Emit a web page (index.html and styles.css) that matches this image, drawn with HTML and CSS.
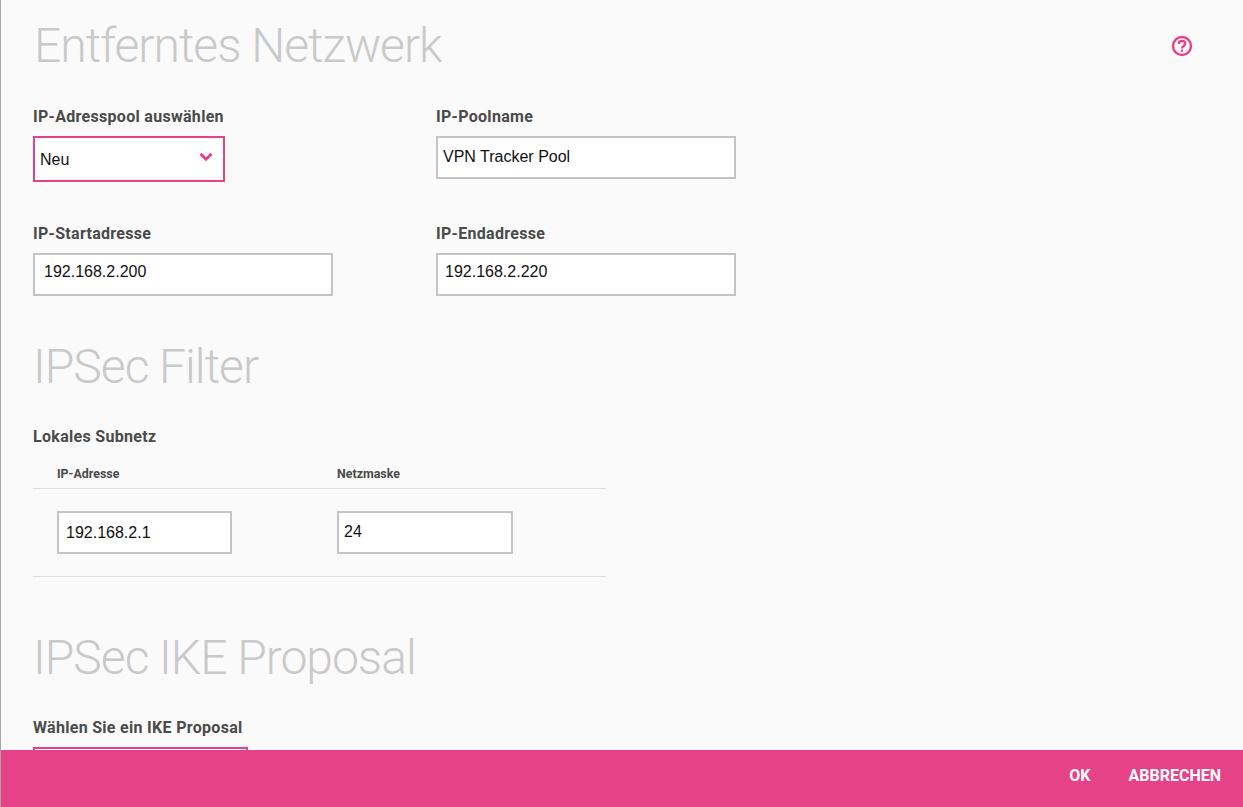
FILE: index.html
```html
<!DOCTYPE html>
<html lang="de">
<head>
    <meta charset="UTF-8">
    <title>Entferntes Netzwerk</title>
    <link rel="stylesheet" href="styles.css">
</head>
<body>
<div class="page">
    <a class="help" href="#" aria-label="Hilfe">
        <svg width="22" height="22" viewBox="0 0 22 22" fill="none" stroke="#e64288">
            <circle cx="11" cy="11" r="9" stroke-width="2.4"/>
            <path d="M7.9 8.9c0-1.900 1.400-3 3.100-3s3.100 1.100 3.100 2.800c0 2.400-3.100 2.400-3.100 4.700" stroke-width="2.4"/>
            <path d="M11 14.600v2.200" stroke-width="2.4"/>
        </svg>
    </a>

    <h1 class="section-title first">Entferntes Netzwerk</h1>

    <div class="form-row row-pool">
        <div class="field">
            <label>IP-Adresspool auswählen</label>
            <div class="select">
                <span>Neu</span>
                <svg class="chevron" width="14" height="10" viewBox="0 0 14 10" fill="none" stroke="#e64288" stroke-width="3">
                    <path d="M1.500 1.800 7 7.200l5.500-5.400"/>
                </svg>
            </div>
        </div>
        <div class="field">
            <label>IP-Poolname</label>
            <input class="input" type="text" value="VPN Tracker Pool">
        </div>
    </div>

    <div class="form-row row-range">
        <div class="field">
            <label>IP-Startadresse</label>
            <input class="input input-start" type="text" value="192.168.2.200">
        </div>
        <div class="field">
            <label>IP-Endadresse</label>
            <input class="input input-end" type="text" value="192.168.2.220">
        </div>
    </div>

    <h2 class="section-title">IPSec Filter</h2>

    <h3 class="group-label">Lokales Subnetz</h3>
    <table class="subnet">
        <thead>
        <tr>
            <th>IP-Adresse</th>
            <th>Netzmaske</th>
        </tr>
        </thead>
        <tbody>
        <tr>
            <td><input class="input input-ip" type="text" value="192.168.2.1"></td>
            <td><input class="input input-mask" type="text" value="24"></td>
        </tr>
        </tbody>
    </table>

    <h2 class="section-title proposal">IPSec IKE Proposal</h2>

    <label class="group-label proposal-label">Wählen Sie ein IKE Proposal</label>
    <div class="select select-proposal"></div>
</div>

<div class="footer">
    <a href="#">OK</a>
    <a href="#">ABBRECHEN</a>
</div>
</body>
</html>
```

FILE: styles.css
```css
html, body {
    height: 100%;
    margin: 0;
    overflow: hidden;
}
body {
    background-color: #fafafa;
    font-family: Roboto, 'Liberation Sans', sans-serif;
    color: #4a4a4a;
}
.page {
    position: relative;
    height: 100vh;
    box-sizing: border-box;
    padding-left: 32px;
    border-left: 1px solid #a6a6a6;
}
.section-title {
    margin: 0;
    font-size: 48px;
    line-height: 56px;
    font-weight: 300;
    letter-spacing: -1px;
    color: #c9c9c9;
}
.section-title.first {
    padding-top: 18px;
    margin-left: 1px;
}
.help {
    position: absolute;
    top: 35px;
    left: 1170px;
    width: 22px;
    height: 22px;
}
.form-row {
    display: flex;
}
.field {
    width: 403px;
}
.field label, .group-label {
    display: block;
    margin: 0;
    font-size: 16px;
    line-height: 20px;
    font-weight: 700;
    letter-spacing: 0.3px;
    color: #4a4a4a;
}
.row-pool {
    margin-top: 33px;
}
.row-pool label {
    margin-bottom: 9px;
}
.row-range {
    margin-top: 42px;
}
.row-range label {
    margin-bottom: 9px;
}
.select {
    display: flex;
    justify-content: space-between;
    box-sizing: border-box;
    width: 192px;
    height: 46px;
    padding: 12px 10px 0 5px;
    background: white;
    border: 2px solid #e64288;
    font-family: 'Liberation Sans', sans-serif;
    font-size: 16px;
    line-height: 20px;
    color: #111;
}
.chevron {
    margin-top: 2px;
}
.input {
    display: block;
    box-sizing: border-box;
    width: 300px;
    height: 43px;
    padding: 0 5px 2px;
    background: white;
    border: 2px solid #c4c4c4;
    border-radius: 0;
    outline: none;
    font-family: 'Liberation Sans', sans-serif;
    font-size: 16px;
    color: #111;
}
.input-start {
    padding-left: 9px;
    padding-bottom: 6px;
}
.input-end {
    padding-left: 7px;
    padding-bottom: 6px;
}
h2.section-title {
    margin-top: 43px;
}
h3.group-label {
    margin-top: 32px;
}
.subnet {
    width: 573px;
    margin-top: 12px;
    border-collapse: collapse;
    border-bottom: 1px solid #dedede;
}
.subnet th {
    height: 29px;
    box-sizing: border-box;
    padding: 0;
    border-bottom: 1px solid #dedede;
    text-align: left;
    font-size: 12.4px;
    font-weight: 700;
    color: #4a4a4a;
}
.subnet th:first-child, .subnet td:first-child {
    width: 280px;
    padding-left: 24px;
}
.subnet td {
    height: 87px;
    padding: 0;
}
.input-ip {
    width: 175px;
    padding-top: 2px;
    padding-left: 7px;
    padding-bottom: 0;
}
.input-mask {
    width: 176px;
    padding-bottom: 0;
}
h2.proposal {
    margin-top: 53px;
}
.proposal-label {
    margin-top: 32px;
}
.select-proposal {
    width: 215px;
    margin-top: 9px;
}
.footer {
    position: fixed;
    left: 0;
    right: 0;
    bottom: 0;
    display: flex;
    justify-content: flex-end;
    gap: 38px;
    box-sizing: border-box;
    height: 57px;
    padding: 16px 22px 0 0;
    background-color: #e64288;
    border-left: 1px solid #a6a6a6;
}
.footer a {
    font-size: 16px;
    line-height: 20px;
    font-weight: 700;
    color: white;
    text-decoration: none;
}
```
